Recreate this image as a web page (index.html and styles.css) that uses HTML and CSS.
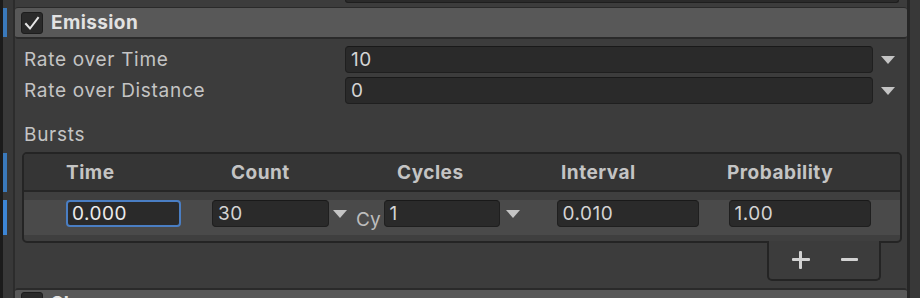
FILE: index.html
```html
<!DOCTYPE html>
<html lang="en">
  <head>
    <meta charset="UTF-8" />
    <meta name="viewport" content="width=device-width, initial-scale=1.0" />
    <title>Particle System - Emission</title>
    <link rel="stylesheet" href="styles.css">
  </head>
  <body>
    <div class="frame">
      <div class="gutter"></div>

      <div class="inspector">
        <div class="prev-field"></div>

        <div class="module-header changed">
          <span class="checkbox checked">
            <svg width="22" height="22" viewBox="0 0 22 22">
              <polyline points="5,12 9,16.5 17,6" fill="none" stroke="#e6e6e6" stroke-width="2" stroke-linecap="square" />
            </svg>
          </span>
          <span class="module-title">Emission</span>
        </div>

        <div class="prop-row">
          <label class="prop-label">Rate over Time</label>
          <div class="field">10</div>
          <span class="dropdown"></span>
        </div>
        <div class="prop-row">
          <label class="prop-label">Rate over Distance</label>
          <div class="field">0</div>
          <span class="dropdown"></span>
        </div>

        <div class="section-label">Bursts</div>

        <div class="burst-table">
          <div class="burst-head changed">
            <span>Time</span>
            <span>Count</span>
            <span>Cycles</span>
            <span>Interval</span>
            <span>Probability</span>
          </div>
          <div class="burst-body">
            <div class="burst-row changed">
              <div class="field cell time focused">0.000</div>
              <div class="field cell count">30</div>
              <span class="dropdown small"></span>
              <span class="mini-label">Cy</span>
              <div class="field cell cycles">1</div>
              <span class="dropdown small"></span>
              <div class="field cell interval">0.010</div>
              <div class="field cell prob">1.00</div>
            </div>
          </div>
        </div>

        <div class="burst-footer">
          <div class="list-buttons">
            <span class="btn-add"></span>
            <span class="btn-remove"></span>
          </div>
        </div>

        <div class="module-header next">
          <span class="checkbox"></span>
          <span class="module-title">Shape</span>
        </div>
      </div>

      <div class="scrollbar"></div>
    </div>
  </body>
</html>
```

FILE: styles.css
```css
body {
  margin: 0;
  width: 920px;
  height: 298px;
  overflow: hidden;
  background-color: #3c3c3c;
  font-family: Inter, "Noto Sans", sans-serif;
  font-size: 19px;
  color: #c4c4c4;
}
.frame {
  position: relative;
  display: flex;
  height: 298px;
}
.gutter {
  width: 10px;
  background-color: #383838;
  border-left: 3px solid #1b1b1b;
  border-right: 2px solid #2c2c2c;
}
.scrollbar {
  width: 10px;
  background-color: #383838;
  border-left: 3px solid #262626;
}
.inspector {
  flex: 1;
  display: flex;
  flex-direction: column;
  min-width: 0;
}
.inspector > * {
  flex-shrink: 0;
}

/* blue override markers in the gutter */
.changed::before {
  content: "";
  position: absolute;
  left: 3px;
  width: 4px;
  background-color: #3a79bb;
}
.module-header.changed::before {
  height: 29px;
}
.burst-head.changed::before {
  height: 39px;
}
.burst-row.changed::before {
  height: 35px;
  background-color: #3d86d6;
}

.prev-field {
  height: 2px;
  margin: 0 8px 0 330px;
  background-color: #2a2a2a;
  border: 1px solid #1e1e1e;
  border-top: none;
  border-radius: 0 0 4px 4px;
}
.module-header {
  display: flex;
  align-items: center;
  height: 29px;
  margin-top: 4px;
  padding-left: 6px;
  background-color: #585858;
  border-top: 1px solid #2a2a2a;
  border-bottom: 2px solid #2a2a2a;
  border-radius: 3px;
}
.module-header.next {
  margin-top: 7px;
  align-items: flex-start;
  padding-top: 2px;
  height: 27px;
  border-top-width: 2px;
}
.checkbox {
  display: block;
  width: 20px;
  height: 20px;
  background-color: #2a2a2a;
  border: 1px solid #1d1d1d;
  border-radius: 3px;
}
.checkbox svg {
  display: block;
  margin: -1px;
}
.module-title {
  margin-left: 8px;
  font-weight: 700;
  color: #e2e2e2;
  letter-spacing: 0.4px;
}

.prop-row {
  display: flex;
  align-items: center;
  height: 27px;
  margin-top: 4px;
  padding-left: 9px;
}
.module-header + .prop-row {
  margin-top: 7px;
}
.prop-label {
  width: 321px;
  letter-spacing: 0.7px;
}
.field {
  box-sizing: border-box;
  height: 27px;
  line-height: 25px;
  padding-left: 5px;
  background-color: #2a2a2a;
  border: 1px solid #1f1f1f;
  border-top-color: #191919;
  border-radius: 4px;
  color: #d4d4d4;
  letter-spacing: 0.5px;
}
.prop-row .field {
  flex: 1;
}
.dropdown {
  width: 0;
  height: 0;
  margin: 0 12px 0 8px;
  border-left: 7px solid transparent;
  border-right: 7px solid transparent;
  border-top: 8px solid #c4c4c4;
}
.dropdown.small {
  margin: 0;
}

.section-label {
  height: 18px;
  margin: 22px 0 0 9px;
  line-height: 18px;
  letter-spacing: 0.7px;
}
.burst-table {
  margin: 8px 5px 0 7px;
  background-color: #3f3f3f;
  border: 2px solid #242424;
  border-radius: 5px;
  overflow: hidden;
}
.burst-head {
  display: grid;
  grid-template-columns: 165px 166px 164px 166px auto;
  align-items: center;
  height: 36px;
  padding-left: 42px;
  background-color: #353535;
  border-bottom: 2px solid #262626;
  font-weight: 700;
  letter-spacing: 0.5px;
}
.burst-body {
  padding: 8px 0 6px;
}
.burst-row {
  display: flex;
  align-items: center;
  height: 35px;
  padding-left: 42px;
  background-color: #4a4a4a;
}
.burst-row .field {
  margin-top: -8px;
  height: 27px;
}
.burst-row .dropdown {
  margin-top: -8px;
}
.cell.time {
  width: 115px;
}
.cell.focused {
  border: 2px solid #4a7ec3;
  line-height: 23px;
  padding-left: 4px;
  color: #ececec;
}
.cell.count {
  width: 117px;
  margin-left: 31px;
  margin-right: 4px;
}
.mini-label {
  margin: 4px 3px 0 9px;
  color: #bdbdbd;
}
.cell.cycles {
  width: 116px;
  margin-right: 6px;
}
.cell.interval {
  width: 142px;
  margin-left: 37px;
}
.cell.prob {
  width: 142px;
  margin-left: 30px;
}

.burst-footer {
  display: flex;
  justify-content: flex-end;
  margin-right: 26px;
}
.list-buttons {
  display: flex;
  align-items: center;
  box-sizing: border-box;
  width: 114px;
  height: 40px;
  margin-top: -2px;
  padding-left: 23px;
  background-color: #3c3c3c;
  border: 2px solid #242424;
  border-top: none;
  border-radius: 0 0 5px 5px;
}
.btn-add,
.btn-remove {
  position: relative;
  width: 18px;
  height: 18px;
}
.btn-add::before,
.btn-add::after,
.btn-remove::before {
  content: "";
  position: absolute;
  background-color: #d2d2d2;
  border-radius: 1px;
}
.btn-add::before {
  left: 0;
  top: 7px;
  width: 18px;
  height: 3px;
}
.btn-add::after {
  left: 7px;
  top: 0;
  width: 3px;
  height: 18px;
}
.btn-remove {
  margin-left: 31px;
}
.btn-remove::before {
  left: 0;
  top: 7px;
  width: 17px;
  height: 3px;
}
```
